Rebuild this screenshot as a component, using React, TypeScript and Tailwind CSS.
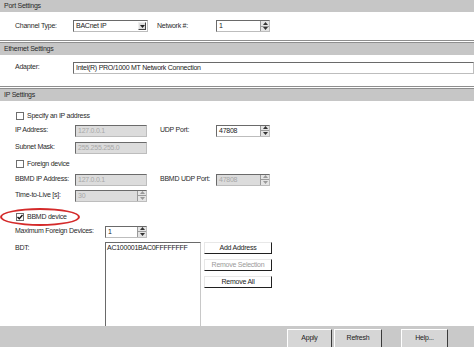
import React from 'react';

const font = "font-['Liberation_Sans',Arial,sans-serif] tracking-[-0.25px] whitespace-nowrap";

function Header({ title }: { title: string }) {
  return (
    <div className="h-[12px] bg-[#c6c6c6] pl-[4px] text-[7px] leading-[12px] text-[#2a2a2a]">
      {title}
    </div>
  );
}

function Sep() {
  return <div className="h-[3px] border-y border-[#8e8e8e] bg-white" />;
}

function Spinner({ disabled }: { disabled?: boolean }) {
  const c = disabled ? '#9a9a9a' : '#333';
  return (
    <div className="flex h-full w-[9px] flex-col border-l border-[#9a9a9a] bg-[#e4e4e4]">
      <div className="flex flex-1 items-center justify-center border-b border-[#9a9a9a]">
        <svg width="5" height="3" viewBox="0 0 5 3">
          <path d="M0 3 L2.5 0 L5 3 Z" fill={c} />
        </svg>
      </div>
      <div className="flex flex-1 items-center justify-center">
        <svg width="5" height="3" viewBox="0 0 5 3">
          <path d="M0 0 L2.5 3 L5 0 Z" fill={c} />
        </svg>
      </div>
    </div>
  );
}

function Field({
  value,
  width,
  disabled,
  spin,
  grow,
}: {
  value: string;
  width?: string;
  disabled?: boolean;
  spin?: boolean;
  grow?: boolean;
}) {
  return (
    <div
      className={`flex h-[12px] items-center border border-t-[#6a6a6a] border-l-[#6a6a6a] border-r-[#bdbdbd] border-b-[#bdbdbd] ${
        disabled ? 'bg-[#dcdcdc] text-[#a8a8a8]' : 'bg-white text-[#222]'
      } ${grow ? 'flex-1' : width}`}
    >
      <span className="flex-1 truncate pl-[2px] text-[7px] leading-[10px]">{value}</span>
      {spin && <Spinner disabled={disabled} />}
    </div>
  );
}

function Check({ checked, label }: { checked?: boolean; label: string }) {
  return (
    <div className="flex h-[10px] items-center pl-[16px]">
      <div className="flex h-[8px] w-[8px] items-center justify-center border border-[#6e6e6e] bg-white">
        {checked && (
          <svg width="6" height="6" viewBox="0 0 6 6">
            <path d="M0.5 3 L2.3 4.8 L5.5 1" stroke="#111" strokeWidth="1.4" fill="none" />
          </svg>
        )}
      </div>
      <span className="ml-[3px] text-[7px] text-[#2a2a2a]">{label}</span>
    </div>
  );
}

function Label({ text, w }: { text: string; w: string }) {
  return <span className={`${w} shrink-0 text-[7px] text-[#2a2a2a]`}>{text}</span>;
}

function WinButton({ text, disabled, w }: { text: string; disabled?: boolean; w: string }) {
  return (
    <div
      className={`flex h-[12px] ${w} items-center justify-center border border-t-[#e8e8e8] border-l-[#e8e8e8] border-r-[#202020] border-b-[#202020] bg-white text-[7px] ${
        disabled ? 'text-[#9a9a9a]' : 'text-[#222]'
      }`}
    >
      {text}
    </div>
  );
}

function BarButton({ text, w }: { text: string; w: string }) {
  return (
    <div
      className={`flex h-[19px] ${w} items-center justify-center border border-t-white border-l-white border-r-[#3a3a3a] border-b-[#3a3a3a] bg-[#d6d6d6] text-[7px] text-[#222]`}
    >
      {text}
    </div>
  );
}

export default function App() {
  return (
    <div className={`flex h-[347px] w-[474px] flex-col overflow-hidden bg-white ${font}`}>
      {/* Port settings */}
      <Header title="Port Settings" />
      <div className="flex h-[28px] items-center pl-[15px]">
        <Label text="Channel Type:" w="w-[58px]" />
        <div className="flex h-[12px] w-[75px] items-center border border-t-[#6a6a6a] border-l-[#6a6a6a] border-r-[#bdbdbd] border-b-[#bdbdbd] bg-white">
          <span className="flex-1 pl-[2px] text-[7px] leading-[10px] text-[#222]">BACnet IP</span>
          <div className="mr-[1px] flex h-[8px] w-[8px] items-center justify-center border border-t-[#f0f0f0] border-l-[#f0f0f0] border-r-[#444] border-b-[#444] bg-[#dedede]">
            <svg width="5" height="3" viewBox="0 0 5 3">
              <path d="M0 0 L2.5 3 L5 0 Z" fill="#222" />
            </svg>
          </div>
        </div>
        <Label text="Network #:" w="ml-[9px] w-[59px]" />
        <Field value="1" width="w-[54px]" spin />
      </div>
      <Sep />

      {/* Ethernet settings */}
      <Header title="Ethernet Settings" />
      <div className="flex h-[31px] items-start pl-[15px] pt-[7px]">
        <Label text="Adapter:" w="w-[58px]" />
        <Field value="Intel(R) PRO/1000 MT Network Connection" grow />
      </div>
      <Sep />

      {/* IP settings */}
      <Header title="IP Settings" />
      <div className="flex flex-1 flex-col">
        <div className="mt-[10px]">
          <Check label="Specify an IP address" />
        </div>
        <div className="mt-[3px] flex h-[13px] items-center pl-[15px]">
          <Label text="IP Address:" w="w-[60px]" />
          <Field value="127.0.0.1" width="w-[72px]" disabled />
          <Label text="UDP Port:" w="ml-[13px] w-[56px]" />
          <Field value="47808" width="w-[54px]" spin />
        </div>
        <div className="mt-[4px] flex h-[13px] items-center pl-[15px]">
          <Label text="Subnet Mask:" w="w-[60px]" />
          <Field value="255.255.255.0" width="w-[72px]" disabled />
        </div>
        <div className="mt-[5px]">
          <Check label="Foreign device" />
        </div>
        <div className="mt-[4px] flex h-[13px] items-center pl-[15px]">
          <Label text="BBMD IP Address:" w="w-[60px]" />
          <Field value="127.0.0.1" width="w-[72px]" disabled />
          <Label text="BBMD UDP Port:" w="ml-[13px] w-[56px]" />
          <Field value="47808" width="w-[54px]" spin disabled />
        </div>
        <div className="mt-[3px] flex h-[13px] items-center pl-[15px]">
          <Label text="Time-to-Live [s]:" w="w-[60px]" />
          <Field value="30" width="w-[72px]" spin disabled />
        </div>
        <div className="relative mt-[10px]">
          <Check checked label="BBMD device" />
          {/* red highlight */}
          <div className="absolute left-[0px] top-[-4px] h-[18px] w-[80px] rounded-[50%] border-2 border-[#d42a2a]" />
        </div>
        <div className="mt-[3px] flex h-[13px] items-center pl-[15px]">
          <Label text="Maximum Foreign Devices:" w="w-[90px]" />
          <Field value="1" width="w-[42px]" spin />
        </div>
        <div className="mt-[4px] flex flex-1 pl-[15px]">
          <Label text="BDT:" w="w-[90px] pt-[1px]" />
          <div className="w-[96px] border border-t-[#6a6a6a] border-l-[#6a6a6a] border-r-[#c8c8c8] border-b-0 bg-white pl-[1px] text-[7px] leading-[10px] text-[#222]">
            AC100001BAC0FFFFFFFF
          </div>
          <div className="ml-[3px] flex flex-col gap-[5px]">
            <WinButton text="Add Address" w="w-[68px]" />
            <WinButton text="Remove Selection" w="w-[68px]" disabled />
            <WinButton text="Remove All" w="w-[68px]" />
          </div>
        </div>
      </div>

      {/* bottom bar */}
      <div className="flex h-[21px] items-start justify-end bg-[#c9c9c9] pr-[26px] pt-[3px]">
        <BarButton text="Apply" w="w-[45px]" />
        <BarButton text="Refresh" w="ml-[2px] w-[48px]" />
        <BarButton text="Help..." w="ml-[19px] w-[47px]" />
      </div>
    </div>
  );
}
